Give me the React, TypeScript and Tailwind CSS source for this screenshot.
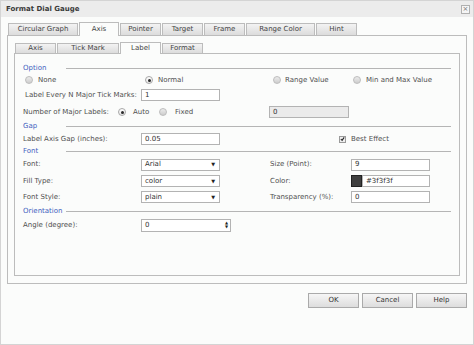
import React from "react";

const Radio = ({ checked }: { checked?: boolean }) =>
  checked ? (
    <span className="w-[8px] h-[8px] rounded-full border border-[#a8a8a8] bg-linear-to-b from-[#ffffff] to-[#e6e6e6] flex items-center justify-center shrink-0">
      <span className="w-[3px] h-[3px] rounded-full bg-[#2a2a2a]" />
    </span>
  ) : (
    <span className="w-[8px] h-[8px] rounded-full border border-[#bdbdbd] bg-linear-to-b from-[#ececec] to-[#cdcdcd] shrink-0" />
  );

const Header = ({ t }: { t: string }) => (
  <div className="flex items-center h-full">
    <span className="w-[43px] shrink-0 text-[#3f5fbf]">{t}</span>
    <div className="flex-1 h-px bg-[#b5b5b5]" />
  </div>
);

const Input = ({ v, w, disabled }: { v: string; w: string; disabled?: boolean }) => (
  <div
    className={`${w} h-[12px] shrink-0 border border-[#b3b3b3] ${
      disabled ? "bg-[#ebebeb]" : "bg-white"
    } pl-[3px] flex items-center text-[#333]`}
  >
    {v}
  </div>
);

const Select = ({ v }: { v: string }) => (
  <div className="w-[79px] h-[12px] shrink-0 border border-[#b3b3b3] bg-white pl-[3px] pr-[4px] flex items-center text-[#333]">
    <span>{v}</span>
    <span className="ml-auto text-[5px] text-[#222]">▼</span>
  </div>
);

const Tab = ({ t, w, active, inner }: { t: string; w: string; active?: boolean; inner?: boolean }) => {
  const h = inner ? (active ? "h-[12px]" : "h-[10px]") : active ? "h-[14px]" : "h-[12px]";
  return (
    <div
      className={`${w} ${h} shrink-0 border border-b-0 border-[#bcbcbc] flex items-center justify-center text-[#444] ${
        active ? "bg-[#fbfcfb] relative z-10 mb-[-1px]" : "bg-linear-to-b from-[#f3f3f3] to-[#dcdcdc]"
      }`}
    >
      {t}
    </div>
  );
};

const Button = ({ t }: { t: string }) => (
  <div className="w-[51px] h-[15px] border border-[#aaaaaa] bg-linear-to-b from-[#f6f6f6] to-[#dddddd] flex items-center justify-center text-[#333]">
    {t}
  </div>
);

export default function App() {
  return (
    <div className="w-[474px] h-[345px] bg-[#fbfcfb] border border-[#d4d4d4] flex flex-col overflow-hidden font-['DejaVu_Sans',sans-serif] text-[7px] leading-none text-[#4f4f4f]">
      {/* Title bar */}
      <div className="h-[16px] shrink-0 bg-[#ececec] flex items-center pl-[5px] pr-[3px]">
        <span className="font-bold text-[#3a3a3a]">Format Dial Gauge</span>
        <div className="ml-auto w-[9px] h-[9px] border border-[#b0b0b0] bg-[#f5f5f5] flex items-center justify-center text-[7px] text-[#777]">
          ×
        </div>
      </div>

      <div className="px-[6px] pt-[5px] flex flex-col">
        {/* Outer tabs */}
        <div className="h-[13px] flex items-end gap-[1px] ml-[1px]">
          <Tab t="Circular Graph" w="w-[70px]" />
          <Tab t="Axis" w="w-[40px]" active />
          <Tab t="Pointer" w="w-[41px]" />
          <Tab t="Target" w="w-[41px]" />
          <Tab t="Frame" w="w-[41px]" />
          <Tab t="Range Color" w="w-[69px]" />
          <Tab t="Hint" w="w-[41px]" />
        </div>

        {/* Outer panel */}
        <div className="h-[249px] border border-[#bcbcbc] px-[6px] pt-[6px] flex flex-col">
          <div className="h-[11px] flex items-end gap-[1px] ml-[1px]">
            <Tab t="Axis" w="w-[41px]" inner />
            <Tab t="Tick Mark" w="w-[62px]" inner />
            <Tab t="Label" w="w-[41px]" inner active />
            <Tab t="Format" w="w-[41px]" inner />
          </div>

          {/* Inner panel */}
          <div className="h-[223px] border border-[#bcbcbc] pl-[8px] pr-[8px] pt-[8px] flex flex-col">
            <div className="h-[12px]">
              <Header t="Option" />
            </div>
            <div className="h-[12px] flex items-center pl-[2px]">
              <div className="w-[120px] flex items-center gap-[5px]">
                <Radio />
                <span>None</span>
              </div>
              <div className="w-[128px] flex items-center gap-[5px]">
                <Radio checked />
                <span>Normal</span>
              </div>
              <div className="w-[80px] flex items-center gap-[4px]">
                <Radio />
                <span>Range Value</span>
              </div>
              <div className="flex items-center gap-[5px]">
                <Radio />
                <span>Min and Max Value</span>
              </div>
            </div>
            <div className="h-[18px] flex items-center">
              <span className="w-[118px] shrink-0 pl-[2px]">Label Every N Major Tick Marks:</span>
              <Input v="1" w="w-[79px]" />
            </div>
            <div className="h-[16px] flex items-center">
              <div className="w-[246px] shrink-0 flex items-center">
                <span className="w-[95px] shrink-0">Number of Major Labels:</span>
                <Radio checked />
                <span className="w-[26px] shrink-0 ml-[7px]">Auto</span>
                <Radio />
                <span className="ml-[8px]">Fixed</span>
              </div>
              <Input v="0" w="w-[80px]" disabled />
            </div>
            <div className="h-[12px]">
              <Header t="Gap" />
            </div>
            <div className="h-[14px] flex items-center">
              <span className="w-[118px] shrink-0">Label Axis Gap (inches):</span>
              <Input v="0.05" w="w-[79px]" />
              <span className="ml-[119px] w-[7px] h-[7px] border border-[#9a9a9a] bg-[#efefef] flex items-center justify-center shrink-0">
                <svg width="6" height="6" viewBox="0 0 6 6">
                  <path d="M1 3 L2.5 4.6 L5 1" stroke="#222" strokeWidth="1.3" fill="none" />
                </svg>
              </span>
              <span className="ml-[5px]">Best Effect</span>
            </div>
            <div className="h-[10px]">
              <Header t="Font" />
            </div>
            <div className="h-[17px] flex items-center">
              <span className="w-[118px] shrink-0">Font:</span>
              <Select v="Arial" />
              <span className="ml-[50px] w-[81px] shrink-0">Size (Point):</span>
              <Input v="9" w="w-[79px]" />
            </div>
            <div className="h-[16px] flex items-center">
              <span className="w-[118px] shrink-0">Fill Type:</span>
              <Select v="color" />
              <span className="ml-[50px] w-[81px] shrink-0">Color:</span>
              <div className="w-[11px] h-[12px] bg-[#3f3f3f] border border-[#222] shrink-0" />
              <Input v="#3f3f3f" w="w-[68px]" />
            </div>
            <div className="h-[16px] flex items-center">
              <span className="w-[118px] shrink-0">Font Style:</span>
              <Select v="plain" />
              <span className="ml-[50px] w-[81px] shrink-0">Transparency (%):</span>
              <Input v="0" w="w-[79px]" />
            </div>
            <div className="h-[12px]">
              <Header t="Orientation" />
            </div>
            <div className="h-[16px] flex items-center">
              <span className="w-[118px] shrink-0">Angle (degree):</span>
              <div className="w-[90px] h-[13px] border border-[#b3b3b3] bg-white pl-[3px] pr-[2px] flex items-center text-[#333]">
                <span>0</span>
                <span className="ml-auto flex flex-col items-center text-[4px] leading-[4px] text-[#222]">
                  <span>▲</span>
                  <span>▼</span>
                </span>
              </div>
            </div>
          </div>
        </div>

        {/* Buttons */}
        <div className="mt-[9px] flex justify-end gap-[3px]">
          <Button t="OK" />
          <Button t="Cancel" />
          <Button t="Help" />
        </div>
      </div>
    </div>
  );
}
